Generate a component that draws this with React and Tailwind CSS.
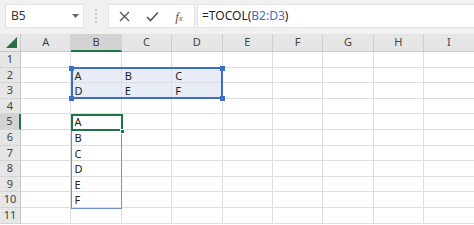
import React from "react";

const cols = ["A", "B", "C", "D", "E", "F", "G", "H", "I"];
const rows = [1, 2, 3, 4, 5, 6, 7, 8, 9, 10, 11];

const data = {
  "B2": "A", "C2": "B", "D2": "C",
  "B3": "D", "C3": "E", "D3": "F",
  "B5": "A", "B6": "B", "B7": "C", "B8": "D", "B9": "E", "B10": "F",
};

function Cell({ col, row }) {
  const key = col + row;
  const fill = (row === 2 || row === 3) && (col === "B" || col === "C" || col === "D");
  return (
    <div
      className={
        "h-[15.6px] border-r border-b border-[#dedede] pl-[3px] text-[11px] leading-[15px] text-[#222] overflow-hidden whitespace-nowrap " +
        (fill ? "bg-[#e8ecf6]" : "bg-white")
      }
    >
      {data[key] || ""}
    </div>
  );
}

export default function App() {
  return (
    <div className="w-[474px] h-[225px] overflow-hidden bg-white font-['Noto_Sans','Open_Sans',sans-serif]">
      {/* Formula bar */}
      <div className="h-[34px] bg-[#f1f1f1] flex items-start pt-[4px]">
        <div className="ml-[5px] w-[79px] h-[24px] bg-white border border-[#e2e2e2] flex items-center justify-between pl-[5px] pr-[4px]">
          <span className="text-[12px] text-[#333]">B5</span>
          <svg width="7" height="4" viewBox="0 0 7 4"><path d="M0 0h7L3.5 4z" fill="#666" /></svg>
        </div>
        <div className="w-[24px] h-[24px] flex flex-col items-center justify-center gap-[2px]">
          <span className="w-[2px] h-[2px] bg-[#c6c6c6]" />
          <span className="w-[2px] h-[2px] bg-[#c6c6c6]" />
          <span className="w-[2px] h-[2px] bg-[#c6c6c6]" />
          <span className="w-[2px] h-[2px] bg-[#c6c6c6]" />
        </div>
        <div className="w-[87px] h-[24px] bg-white border border-[#e2e2e2] flex items-center">
          <div className="w-[30px] flex justify-center">
            <svg width="11" height="11" viewBox="0 0 11 11"><path d="M1 1L10 10M10 1L1 10" stroke="#555" strokeWidth="1.3" fill="none" /></svg>
          </div>
          <div className="w-[26px] flex justify-center">
            <svg width="13" height="11" viewBox="0 0 13 11"><path d="M1 6L4.5 9.5L12 1.5" stroke="#555" strokeWidth="1.6" fill="none" /></svg>
          </div>
          <div className="w-[28px] flex justify-center">
            <span className="font-['Liberation_Serif',serif] italic text-[13px] text-[#555] leading-none">
              f<span className="text-[9px]">x</span>
            </span>
          </div>
        </div>
        <div className="ml-[2px] flex-1 h-[24px] bg-white border border-[#e2e2e2] border-r-0 flex items-center pl-[4px]">
          <span className="text-[12px] text-[#222]">
            =TOCOL(<span className="text-[#3f73c6]">B2:D3</span>)
          </span>
        </div>
      </div>

      {/* Grid */}
      <div className="relative">
        <div className="grid grid-cols-[21px_repeat(9,50.4px)]">
          {/* corner */}
          <div className="h-[18px] bg-[#e6e6e6] border-r border-b border-[#c9c9c9] relative">
            <svg className="absolute right-[3px] bottom-[3px]" width="11" height="11" viewBox="0 0 11 11"><path d="M11 0V11H0z" fill="#2a6f45" /></svg>
          </div>
          {cols.map((c) => (
            <div
              key={c}
              className={
                "h-[18px] flex items-center justify-center text-[11px] text-[#444] border-r border-[#cfcfcf] " +
                (c === "B" ? "bg-[#d3d3d3] border-b-2 border-b-[#217346]" : "bg-[#e6e6e6] border-b border-b-[#c9c9c9]")
              }
            >
              {c}
            </div>
          ))}
          {rows.map((r) => (
            <React.Fragment key={r}>
              <div
                className={
                  "h-[15.6px] flex items-center justify-center text-[11px] text-[#444] border-b border-[#d4d4d4] " +
                  (r === 5 ? "bg-[#d3d3d3] border-r-2 border-r-[#217346]" : "bg-[#e6e6e6] border-r border-r-[#c9c9c9]")
                }
              >
                {r}
              </div>
              {cols.map((c) => (
                <Cell key={c} col={c} row={r} />
              ))}
            </React.Fragment>
          ))}
        </div>

        {/* Selection B2:D3 */}
        <div className="absolute left-[70.6px] top-[32.8px] w-[152.4px] h-[32px] border-2 border-[#3f6fc4] pointer-events-none" />
        <div className="absolute left-[69.4px] top-[31.6px] w-[5px] h-[5px] bg-[#3f6fc4]" />
        <div className="absolute left-[220.2px] top-[31.6px] w-[5px] h-[5px] bg-[#3f6fc4]" />
        <div className="absolute left-[69.4px] top-[62.2px] w-[5px] h-[5px] bg-[#3f6fc4]" />
        <div className="absolute left-[220.2px] top-[62.2px] w-[5px] h-[5px] bg-[#3f6fc4]" />

        {/* Spill B5:B10 */}
        <div className="absolute left-[71px] top-[80.4px] w-[51.2px] h-[94.6px] border border-[#6f8fd0] pointer-events-none" />
        {/* Active cell B5 */}
        <div className="absolute left-[70.6px] top-[80px] w-[52px] h-[17.2px] border-2 border-[#217346] pointer-events-none" />
        <div className="absolute left-[119.6px] top-[94.6px] w-[5px] h-[5px] bg-[#217346] border border-white" />
      </div>
    </div>
  );
}
